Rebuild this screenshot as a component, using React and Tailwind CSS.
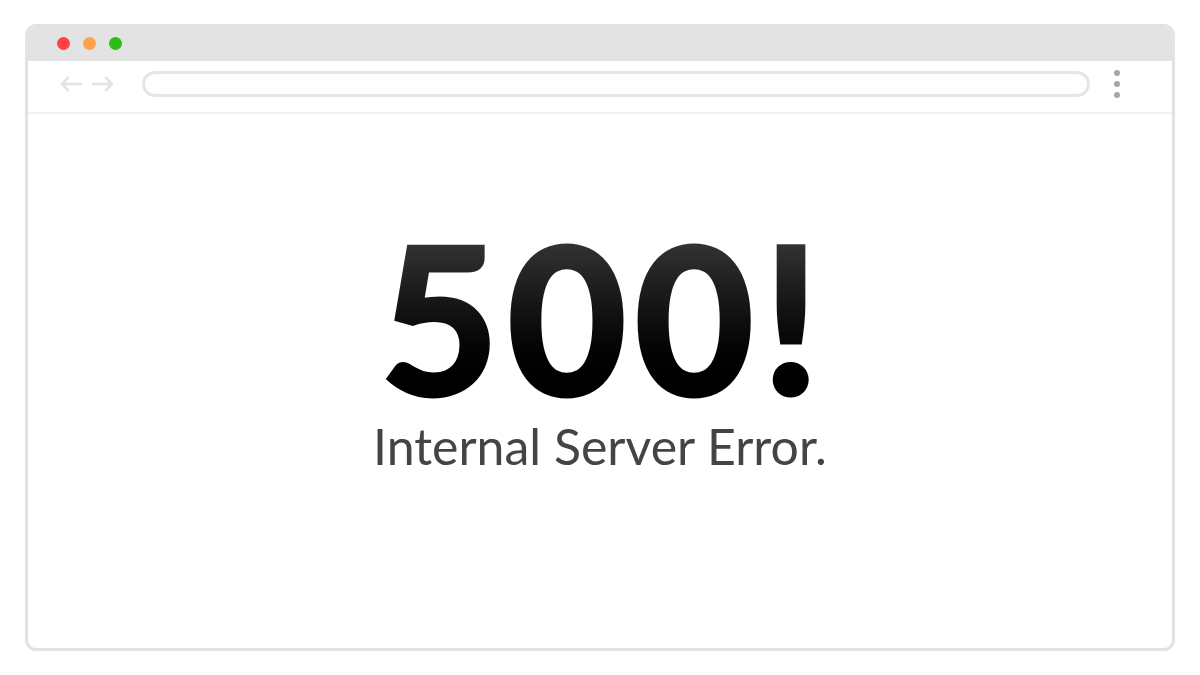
import React from 'react';

function Arrow({ dir }) {
    return (
        <svg width="24" height="16" viewBox="0 0 24 16" fill="none" stroke="#e3e3e3" strokeWidth="2.5" strokeLinecap="round" strokeLinejoin="round">
            {dir === 'left' ? (
                <path d="M22 8H3M9 2L3 8l6 6" />
            ) : (
                <path d="M2 8h19M15 2l6 6-6 6" />
            )}
        </svg>
    );
}

export default function App() {
    return (
        <div className="w-[1200px] h-[675px] bg-white pt-[24px] px-[25px]" style={{ fontFamily: 'Lato, "Noto Sans", sans-serif' }}>
            <div className="h-[627px] rounded-[11px] border-[3px] border-[#e3e3e3] overflow-hidden flex flex-col">
                <div className="h-[34px] bg-[#e3e3e3] flex items-center gap-[13px] pl-[29px] pb-[2px]">
                    <span className="w-[13px] h-[13px] rounded-full bg-[#ff4242]" />
                    <span className="w-[13px] h-[13px] rounded-full bg-[#ffa24d]" />
                    <span className="w-[13px] h-[13px] rounded-full bg-[#2fbc16]" />
                </div>
                <div className="h-[53px] border-b-2 border-[#f1f1f1] flex items-center pl-[31px] pr-[52px] pb-[5px]">
                    <div className="flex items-center gap-[8px]">
                        <Arrow dir="left" />
                        <Arrow dir="right" />
                    </div>
                    <div className="ml-[27px] flex-1 h-[26px] rounded-full border-[3px] border-[#e6e6e6]" />
                    <div className="ml-[24px] flex flex-col gap-[5px]">
                        <span className="w-[6px] h-[6px] rounded-full bg-[#a6a6a6]" />
                        <span className="w-[6px] h-[6px] rounded-full bg-[#a6a6a6]" />
                        <span className="w-[6px] h-[6px] rounded-full bg-[#a6a6a6]" />
                    </div>
                </div>
                <div className="flex-1 flex flex-col items-center pt-[111px]">
                    <h1 className="pl-[9px] text-[204px] leading-[180px] font-bold tracking-[9px] [-webkit-text-stroke:5px_transparent] bg-gradient-to-b from-[#3c3c3c] to-[#000000] bg-clip-text text-transparent">
                        500!
                    </h1>
                    <p className="mt-[13px] text-[50px] leading-[56px] text-[#444444]">Internal Server Error.</p>
                </div>
            </div>
        </div>
    );
}
